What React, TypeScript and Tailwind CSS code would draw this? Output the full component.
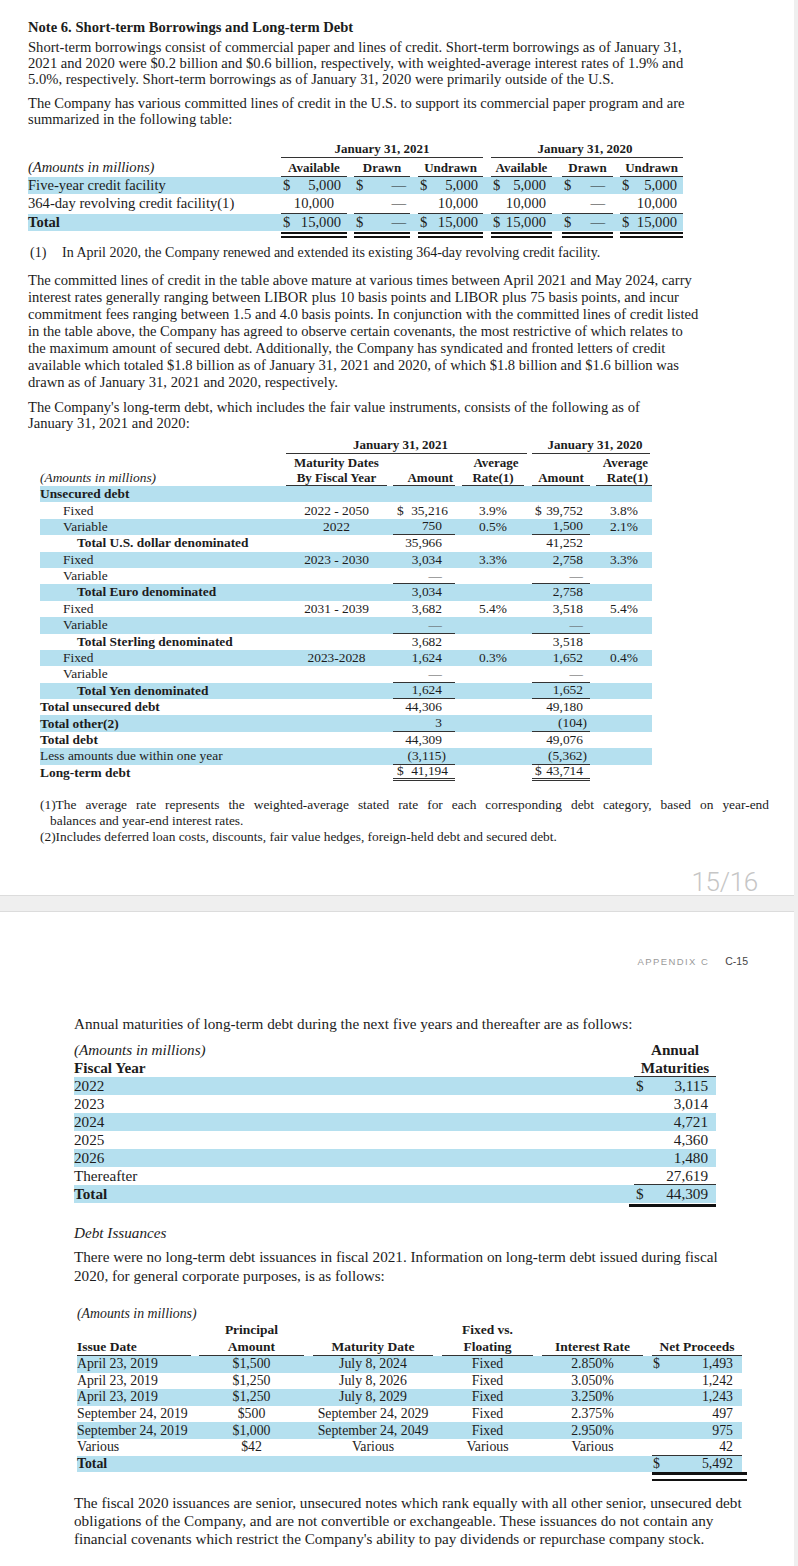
import React from 'react'

const BLUE = 'bg-[#b5e0ef]'

// table 1 columns (Available / Drawn / Undrawn for two years)
const T1W = ['w-[66px]', 'w-[56px]', 'w-[65px]', 'w-[61px]', 'w-[51px]', 'w-[63px]']
const T1G = ['', 'ml-[7px]', 'ml-[8px]', 'ml-[8px]', 'ml-[10px]', 'ml-[7px]']
const T1PR = ['pr-[6px]', 'pr-[4px]', 'pr-[5px]', 'pr-[6px]', 'pr-[8px]', 'pr-[6px]']
const T1H = ['Available', 'Drawn', 'Undrawn', 'Available', 'Drawn', 'Undrawn']

type Row1Props = {
  label: string
  vals: string[]
  dollar?: boolean
  blue?: boolean
  bold?: boolean
  h: string
  ul?: boolean
  pr?: string[]
}

const Row1 = ({ label, vals, dollar, blue, bold, h, ul, pr }: Row1Props) => (
  <div className={`flex items-stretch w-[655px] ${h} ${blue ? BLUE : ''}`}>
    <div className={`w-[253px] flex items-center ${bold ? 'font-bold' : ''}`}>{label}</div>
    {vals.map((v, i) => (
      <div
        key={i}
        className={`${T1W[i]} ${T1G[i]} flex items-center justify-between pl-[2px] ${pr ? pr[i] : T1PR[i]} ${ul ? 'border-b border-[#333]' : ''}`}
      >
        <span>{dollar ? '$' : ''}</span>
        <span>{v}</span>
      </div>
    ))}
  </div>
)

// table 2 columns
const T2W = ['w-[101px]', 'w-[62px]', 'w-[62px]', 'w-[58px]', 'w-[56px]']
const T2G = ['', 'ml-[6px]', 'ml-[7px]', 'ml-[8px]', 'ml-[6px]']

type Row2 = {
  label: string
  lv: 0 | 1 | 2
  blue?: boolean
  mat?: string
  a21?: string
  r21?: string
  a20?: string
  r20?: string
  d?: boolean
  ul?: boolean
  dbl?: boolean
}

const rows2: Row2[] = [
  { label: 'Unsecured debt', lv: 0, blue: true },
  { label: 'Fixed', lv: 1, mat: '2022 - 2050', a21: '35,216', r21: '3.9%', a20: '39,752', r20: '3.8%', d: true },
  { label: 'Variable', lv: 1, blue: true, mat: '2022', a21: '750', r21: '0.5%', a20: '1,500', r20: '2.1%', ul: true },
  { label: 'Total U.S. dollar denominated', lv: 2, a21: '35,966', a20: '41,252' },
  { label: 'Fixed', lv: 1, blue: true, mat: '2023 - 2030', a21: '3,034', r21: '3.3%', a20: '2,758', r20: '3.3%' },
  { label: 'Variable', lv: 1, a21: '—', a20: '—', ul: true },
  { label: 'Total Euro denominated', lv: 2, blue: true, a21: '3,034', a20: '2,758' },
  { label: 'Fixed', lv: 1, mat: '2031 - 2039', a21: '3,682', r21: '5.4%', a20: '3,518', r20: '5.4%' },
  { label: 'Variable', lv: 1, blue: true, a21: '—', a20: '—', ul: true },
  { label: 'Total Sterling denominated', lv: 2, a21: '3,682', a20: '3,518' },
  { label: 'Fixed', lv: 1, blue: true, mat: '2023-2028', a21: '1,624', r21: '0.3%', a20: '1,652', r20: '0.4%' },
  { label: 'Variable', lv: 1, a21: '—', a20: '—', ul: true },
  { label: 'Total Yen denominated', lv: 2, blue: true, a21: '1,624', a20: '1,652', ul: true },
  { label: 'Total unsecured debt', lv: 0, a21: '44,306', a20: '49,180' },
  { label: 'Total other(2)', lv: 0, blue: true, a21: '3', a20: '(104)', ul: true },
  { label: 'Total debt', lv: 0, a21: '44,309', a20: '49,076' },
  { label: 'Less amounts due within one year', lv: 0, blue: true, a21: '(3,115)', a20: '(5,362)', ul: true },
  { label: 'Long-term debt', lv: 0, a21: '41,194', a20: '43,714', d: true, dbl: true },
]

const labelCls = (r: Row2) => {
  if (r.lv === 2) return 'pl-[37px] font-bold'
  if (r.lv === 1) return 'pl-[23px]'
  if (r.label === 'Less amounts due within one year') return ''
  return 'font-bold'
}

const Amount = ({ v, d, w, g, pl, pr, line }: { v?: string; d?: boolean; w: string; g: string; pl: string; pr: string; line: string }) => (
  <div className={`${w} ${g} flex items-center justify-between ${pl} ${pr} ${line}`}>
    <span>{d ? '$' : ''}</span>
    <span className={v && v.endsWith(')') ? 'mr-[-4px]' : v === '—' ? 'text-[#555]' : ''}>{v}</span>
  </div>
)

const issues = [
  ['April 23, 2019', '$1,500', 'July 8, 2024', 'Fixed', '2.850%', '1,493'],
  ['April 23, 2019', '$1,250', 'July 8, 2026', 'Fixed', '3.050%', '1,242'],
  ['April 23, 2019', '$1,250', 'July 8, 2029', 'Fixed', '3.250%', '1,243'],
  ['September 24, 2019', '$500', 'September 24, 2029', 'Fixed', '2.375%', '497'],
  ['September 24, 2019', '$1,000', 'September 24, 2049', 'Fixed', '2.950%', '975'],
  ['Various', '$42', 'Various', 'Various', 'Various', '42'],
]

const maturities = [
  ['2022', '3,115'],
  ['2023', '3,014'],
  ['2024', '4,721'],
  ['2025', '4,360'],
  ['2026', '1,480'],
  ['Thereafter', '27,619'],
]

export default function App() {
  return (
    <div className="w-[798px] min-h-[1566px] bg-[#efefef] text-[#1c1c1c] font-['Liberation_Serif',serif]">
      {/* page 15 */}
      <div className="w-[794px] h-[896px] bg-white border-b border-[#dcdcdc]">
        <div className="pl-[28px] pt-[18px]">
          <h1 className="text-[14.6px] leading-[18px] font-bold">Note 6. Short-term Borrowings and Long-term Debt</h1>
          <p className="mt-[3px] text-[14.6px] leading-[16px]">
            Short-term borrowings consist of commercial paper and lines of credit. Short-term borrowings as of January 31,
            <br />
            2021 and 2020 were $0.2 billion and $0.6 billion, respectively, with weighted-average interest rates of 1.9% and
            <br />
            5.0%, respectively. Short-term borrowings as of January 31, 2020 were primarily outside of the U.S.
          </p>
          <p className="mt-[8px] text-[14.6px] leading-[16px]">
            The Company has various committed lines of credit in the U.S. to support its commercial paper program and are
            <br />
            summarized in the following table:
          </p>

          {/* committed lines of credit */}
          <div className="mt-[14px] text-[14.6px]">
            <div className="flex h-[17px] text-[13px] font-bold">
              <div className="w-[253px]" />
              <div className="w-[202px] text-center border-b border-[#333] leading-[16px]">January 31, 2021</div>
              <div className="w-[8px]" />
              <div className="w-[192px] text-center border-b border-[#333] leading-[16px] pr-[4px]">January 31, 2020</div>
            </div>
            <div className="flex h-[18px] mt-[1px]">
              <div className="w-[253px] italic leading-[17px]">(Amounts in millions)</div>
              {T1H.map((t, i) => (
                <div key={i} className={`${T1W[i]} ${T1G[i]} text-center text-[13px] font-bold leading-[17px] border-b border-[#333]`}>
                  {t}
                </div>
              ))}
            </div>
            <Row1 label="Five-year credit facility" vals={['5,000', '—', '5,000', '5,000', '—', '5,000']} dollar blue h="h-[17px]" />
            <Row1
              label="364-day revolving credit facility(1)"
              vals={['10,000', '—', '10,000', '10,000', '—', '10,000']}
              h="h-[20px]"
              ul
              pr={['pr-[13px]', 'pr-[4px]', 'pr-[5px]', 'pr-[6px]', 'pr-[8px]', 'pr-[6px]']}
            />
            <Row1 label="Total" vals={['15,000', '—', '15,000', '15,000', '—', '15,000']} dollar blue bold h="h-[17px]" />
            <div className="flex mt-[1px]">
              <div className="w-[253px]" />
              {T1W.map((w, i) => (
                <div key={i} className={`${w} ${T1G[i]} h-[6px] border-y-2 border-[#111]`} />
              ))}
            </div>
          </div>

          <div className="mt-[7px] flex text-[14px] leading-[16px]">
            <span className="w-[34px] pl-[2px]">(1)</span>
            <span>In April 2020, the Company renewed and extended its existing 364-day revolving credit facility.</span>
          </div>

          <p className="mt-[11px] text-[14.6px] leading-[17px]">
            The committed lines of credit in the table above mature at various times between April 2021 and May 2024, carry
            <br />
            interest rates generally ranging between LIBOR plus 10 basis points and LIBOR plus 75 basis points, and incur
            <br />
            commitment fees ranging between 1.5 and 4.0 basis points. In conjunction with the committed lines of credit listed
            <br />
            in the table above, the Company has agreed to observe certain covenants, the most restrictive of which relates to
            <br />
            the maximum amount of secured debt. Additionally, the Company has syndicated and fronted letters of credit
            <br />
            available which totaled $1.8 billion as of January 31, 2021 and 2020, of which $1.8 billion and $1.6 billion was
            <br />
            drawn as of January 31, 2021 and 2020, respectively.
          </p>
          <p className="mt-[8px] text-[14.6px] leading-[16px]">
            The Company's long-term debt, which includes the fair value instruments, consists of the following as of
            <br />
            January 31, 2021 and 2020:
          </p>

          {/* long-term debt */}
          <div className="mt-[6px] ml-[12px] w-[612px] text-[13.4px]">
            <div className="flex h-[17px] text-[13px] font-bold">
              <div className="w-[246px]" />
              <div className="w-[241px] text-center pr-[12px] border-b border-[#333] leading-[16px]">January 31, 2021</div>
              <div className="w-[5px]" />
              <div className="w-[118px] text-center pl-[8px] border-b border-[#333] leading-[16px]">January 31, 2020</div>
            </div>
            <div className="flex h-[32px] items-stretch font-bold text-[13px] leading-[15px]">
              <div className="w-[246px] flex items-end pb-[1px] font-normal italic text-[13.4px]">(Amounts in millions)</div>
              <div className={`${T2W[0]} flex flex-col justify-end items-center border-b border-[#333]`}>
                <span>Maturity Dates</span>
                <span>By Fiscal Year</span>
              </div>
              <div className={`${T2W[1]} ${T2G[1]} flex flex-col justify-end items-end pr-[2px] border-b border-[#333]`}>
                <span>Amount</span>
              </div>
              <div className={`${T2W[2]} ${T2G[2]} flex flex-col justify-end items-center border-b border-[#333]`}>
                <span className="pl-[6px]">Average</span>
                <span>Rate(1)</span>
              </div>
              <div className={`${T2W[3]} ${T2G[3]} flex flex-col justify-end items-center border-b border-[#333]`}>
                <span>Amount</span>
              </div>
              <div className={`${T2W[4]} ${T2G[4]} flex flex-col justify-end items-end pr-[4px] border-b border-[#333]`}>
                <span>Average</span>
                <span>Rate(1)</span>
              </div>
            </div>
            {rows2.map((r, i) => {
              const line = r.dbl ? 'border-b-[3px] border-double border-[#333]' : r.ul ? 'border-b border-[#333]' : ''
              return (
                <div key={i} className={`flex items-stretch w-[612px] h-[16.4px] ${r.blue ? BLUE : ''}`}>
                  <div className={`w-[246px] flex items-center ${labelCls(r)}`}>{r.label}</div>
                  <div className={`${T2W[0]} flex items-center justify-center`}>{r.mat}</div>
                  <Amount v={r.a21} d={r.d} w={T2W[1]} g={T2G[1]} pl="pl-[4px]" pr={r.d ? 'pr-[7px]' : 'pr-[13px]'} line={line} />
                  <div className={`${T2W[2]} ${T2G[2]} flex items-center justify-center`}>{r.r21}</div>
                  <Amount v={r.a20} d={r.d} w={T2W[3]} g={T2G[3]} pl="pl-[3px]" pr="pr-[7px]" line={line} />
                  <div className={`${T2W[4]} ${T2G[4]} flex items-center justify-center`}>{r.r20}</div>
                </div>
              )
            })}
          </div>

          <div className="mt-[16px] ml-[12px] text-[13.4px] leading-[16px]">
            <p className="w-[729px] text-justify [text-align-last:justify]">
              (1)The average rate represents the weighted-average stated rate for each corresponding debt category, based on year-end
            </p>
            <p className="pl-[10px]">balances and year-end interest rates.</p>
            <p>(2)Includes deferred loan costs, discounts, fair value hedges, foreign-held debt and secured debt.</p>
          </div>
        </div>
        <div className="mt-[23px] flex justify-end pr-[36px] font-['Roboto',sans-serif] font-light text-[26px] leading-[28px] text-[#c6c6c6] tracking-[-0.3px]">
          15/16
        </div>
      </div>

      {/* page C-15 */}
      <div className="w-[794px] h-[655px] mt-[15px] bg-white border-t border-[#dcdcdc] pl-[74px]">
        <div className="pt-[44px] flex justify-end items-center pr-[46px] h-[56px] font-['Liberation_Sans',sans-serif]">
          <span className="text-[9.5px] tracking-[0.15em] text-[#9a9a9a]">APPENDIX C</span>
          <span className="ml-[16px] text-[10.5px] text-[#444]">C-15</span>
        </div>
        <p className="mt-[47px] text-[15.2px] leading-[18px]">
          Annual maturities of long-term debt during the next five years and thereafter are as follows:
        </p>

        <div className="mt-[8px] w-[642px] text-[15.2px] leading-[18px]">
          <div className="flex h-[18px]">
            <div className="w-[560px] italic">(Amounts in millions)</div>
            <div className="w-[82px] text-center font-bold">Annual</div>
          </div>
          <div className="flex h-[18px]">
            <div className="w-[560px] font-bold">Fiscal Year</div>
            <div className="w-[82px] text-center font-bold border-b border-[#333] leading-[17px]">Maturities</div>
          </div>
          {maturities.map(([y, v], i) => (
            <div key={y} className={`flex h-[18px] ${i % 2 === 0 ? BLUE : ''}`}>
              <div className="w-[560px]">{y}</div>
              <div className={`w-[82px] flex justify-between pl-[2px] pr-[8px] ${y === 'Thereafter' ? 'border-b border-[#333]' : ''}`}>
                <span>{i === 0 ? '$' : ''}</span>
                <span>{v}</span>
              </div>
            </div>
          ))}
          <div className={`flex h-[18px] ${BLUE}`}>
            <div className="w-[560px] font-bold">Total</div>
            <div className="w-[82px] flex justify-between pl-[2px] pr-[8px]">
              <span>$</span>
              <span>44,309</span>
            </div>
          </div>
          <div className="flex mt-[1px]">
            <div className="w-[560px]" />
            <div className="w-[88px] h-[3px] bg-[#111]" />
          </div>
        </div>

        <p className="mt-[17px] italic text-[15.2px] leading-[18px]">Debt Issuances</p>
        <p className="mt-[5px] text-[15.2px] leading-[19px]">
          There were no long-term debt issuances in fiscal 2021. Information on long-term debt issued during fiscal
          <br />
          2020, for general corporate purposes, is as follows:
        </p>

        <div className="ml-[3px] text-[13.8px]">
          <p className="mt-[21px] italic text-[13.8px] leading-[16px]">(Amounts in millions)</p>
          <div className="flex h-[34px] items-stretch font-bold text-[13.5px] leading-[16.5px]">
            <div className="w-[114px] flex items-end border-b border-[#333]">Issue Date</div>
            <div className="w-[105px] ml-[8px] flex flex-col justify-end items-center border-b border-[#333]">
              <span>Principal</span>
              <span>Amount</span>
            </div>
            <div className="w-[120px] ml-[9px] flex items-end justify-center border-b border-[#333]">Maturity Date</div>
            <div className="w-[91px] ml-[9px] flex flex-col justify-end items-center border-b border-[#333]">
              <span>Fixed vs.</span>
              <span>Floating</span>
            </div>
            <div className="w-[101px] ml-[9px] flex items-end justify-center border-b border-[#333]">Interest Rate</div>
            <div className="w-[90px] ml-[9px] flex items-end justify-center border-b border-[#333]">Net Proceeds</div>
          </div>
          {issues.map((r, i) => (
            <div key={i} className={`flex items-stretch w-[665px] h-[16.6px] leading-[16px] ${i % 2 === 0 ? BLUE : ''}`}>
              <div className="w-[114px] flex items-center">{r[0]}</div>
              <div className="w-[105px] ml-[8px] flex items-center justify-center">{r[1]}</div>
              <div className="w-[120px] ml-[9px] flex items-center justify-center">{r[2]}</div>
              <div className="w-[91px] ml-[9px] flex items-center justify-center">{r[3]}</div>
              <div className="w-[101px] ml-[9px] flex items-center justify-center">{r[4]}</div>
              <div className={`w-[90px] ml-[9px] flex items-center justify-between pl-[1px] pr-[9px] ${i === 5 ? 'border-b border-[#333]' : ''}`}>
                <span>{i === 0 ? '$' : ''}</span>
                <span>{r[5]}</span>
              </div>
            </div>
          ))}
          <div className={`flex items-stretch w-[665px] h-[16.6px] leading-[16px] ${BLUE}`}>
            <div className="w-[575px] flex items-center font-bold">Total</div>
            <div className="w-[90px] flex items-center justify-between pl-[1px] pr-[9px]">
              <span>$</span>
              <span>5,492</span>
            </div>
          </div>
          <div className="flex">
            <div className="w-[575px]" />
            <div className="w-[95px] h-[9px] border-t-[3px] border-b-2 border-[#111]" />
          </div>
        </div>

        <p className="mt-[13px] text-[15.2px] leading-[18px]">
          The fiscal 2020 issuances are senior, unsecured notes which rank equally with all other senior, unsecured debt
          <br />
          obligations of the Company, and are not convertible or exchangeable. These issuances do not contain any
          <br />
          financial covenants which restrict the Company's ability to pay dividends or repurchase company stock.
        </p>
      </div>
    </div>
  )
}
